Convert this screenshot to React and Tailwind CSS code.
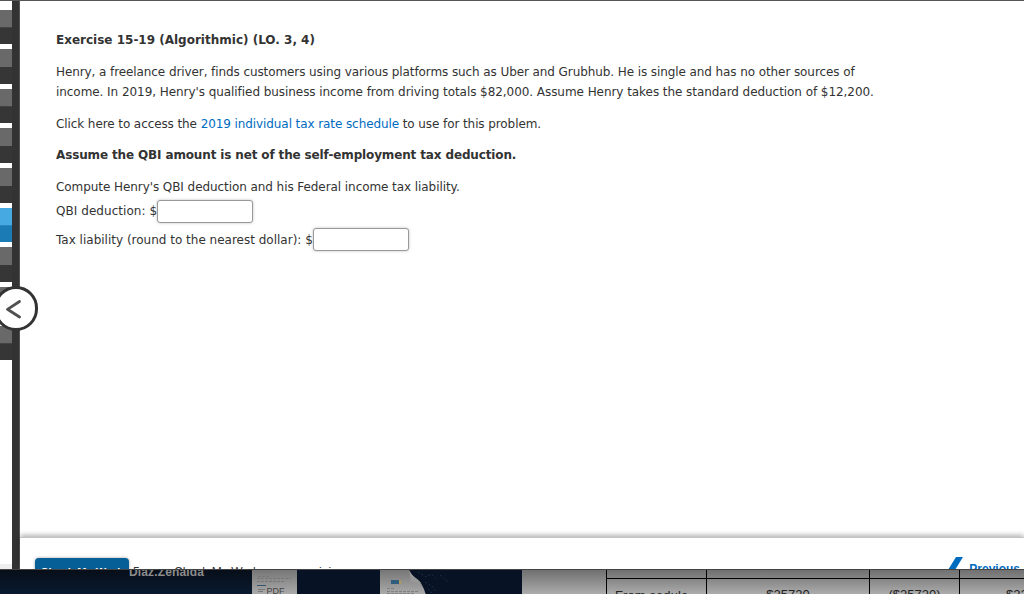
import clsx from 'clsx';

const TILES = [
  { id: 1, height: 'h-[34px]' },
  { id: 2, height: 'h-[35px]' },
  { id: 3, height: 'h-[34px]' },
  { id: 4, height: 'h-[35px]' },
  { id: 5, height: 'h-[35px]' },
  { id: 6, height: 'h-[34px]', active: true },
  { id: 7, height: 'h-[35px]' },
  { id: 8, height: 'h-[34px]' },
  { id: 9, height: 'h-[34px]' },
];

function QuestionRail() {
  return (
    <aside className="relative flex w-5 shrink-0">
      <div className="flex w-3 flex-col justify-between bg-white">
        <div className="flex flex-col gap-[5px] pt-[9px]">
          {TILES.map((tile) => (
            <div
              key={tile.id}
              className={clsx(
                'w-3',
                tile.height,
                tile.active
                  ? 'bg-linear-to-b from-[#47a9e1] from-50% to-[#1b7bb5] to-52%'
                  : 'bg-linear-to-b from-[#696969] from-50% to-[#363636] to-52%'
              )}
            />
          ))}
        </div>
        <div className="h-[5px] bg-[#eeeeee]" />
      </div>
      <div className="w-2 border-r border-[#555555] bg-[#333333]" />
      <button
        type="button"
        aria-label="Collapse"
        className="absolute top-[285px] -left-1.5 z-10 flex h-[45px] w-11 items-center rounded-full border-3 border-[#333333] bg-white pl-2"
      >
        <svg width="16" height="20" viewBox="0 0 16 20" fill="none" stroke="#505050" strokeWidth="2.8" strokeLinecap="round" strokeLinejoin="round">
          <path d="M14.5 2.5 2.5 10.3 14.5 18" />
        </svg>
      </button>
    </aside>
  );
}

function AnswerInput({ label }) {
  return (
    <input
      aria-label={label}
      className="h-[23px] w-24 rounded-[3px] border border-[#999999] bg-white shadow-[0_0_3px_rgba(0,0,0,0.25)] outline-none"
    />
  );
}

function Exercise() {
  return (
    <main className="h-[536px] overflow-hidden pt-[29px] pl-9 font-['DejaVu_Sans'] text-[12px] leading-[20.5px] whitespace-nowrap text-[#333333]">
      <h1 className="font-bold">Exercise 15-19 (Algorithmic) (LO. 3, 4)</h1>
      <div className="mt-[11px]">
        <p className="tracking-[-0.09px]">Henry, a freelance driver, finds customers using various platforms such as Uber and Grubhub. He is single and has no other sources of</p>
        <p className="tracking-[-0.058px]">income. In 2019, Henry's qualified business income from driving totals $82,000. Assume Henry takes the standard deduction of $12,200.</p>
      </div>
      <p className="mt-[11px] tracking-[-0.09px]">
        Click here to access the <a className="text-[#006cbf]">2019 individual tax rate schedule</a> to use for this problem.
      </p>
      <p className="mt-[11px] font-bold tracking-[-0.14px]">Assume the QBI amount is net of the self-employment tax deduction.</p>
      <p className="mt-[11px] tracking-[-0.07px]">Compute Henry's QBI deduction and his Federal income tax liability.</p>
      <div className="mt-[3px] flex h-[23px] items-center">
        <span className="tracking-[0.05px]">QBI deduction: $</span>
        <AnswerInput label="QBI deduction" />
      </div>
      <div className="mt-[5px] flex h-[23px] items-center">
        <span className="pt-px">Tax liability (round to the nearest dollar): $</span>
        <AnswerInput label="Tax liability" />
      </div>
    </main>
  );
}

function ActionBar() {
  return (
    <footer className="relative flex h-8 items-start border-t border-[#c4c4c4] bg-white pl-[15px] shadow-[0_-2px_5px_rgba(0,0,0,0.3)]">
      <button type="button" className="mt-5 flex h-7 w-[94px] items-start justify-center rounded-[4px] bg-[#075f98] pt-1.5 font-['Liberation_Sans'] text-[11px] leading-4 font-bold tracking-[0.1px] whitespace-nowrap text-white shadow-[0_0_3px_rgba(0,0,0,0.4)]">
        Check My Work
      </button>
      <p className="mt-[26px] ml-1 font-['Liberation_Sans'] text-[12px] leading-4 tracking-[0.05px] whitespace-nowrap text-[#333333]">
        5 more Check My Work uses remaining.
      </p>
      <div className="mt-[19px] mr-1 ml-auto flex items-start gap-[5px] text-[#006cbf]">
        <svg width="16" height="26" viewBox="0 0 16 26" fill="currentColor">
          <path d="M8 0h7L7 13l8 13H8L0 13z" />
        </svg>
        <span className="mt-1 font-['Liberation_Sans'] text-[12px] leading-4 font-bold">Previous</span>
      </div>
    </footer>
  );
}

function PdfThumb() {
  return (
    <svg className="shrink-0" width="45" height="25" viewBox="0 0 45 25">
      <defs>
        <linearGradient id="pdf" x1="0" y1="0" x2="0" y2="1">
          <stop offset="0" stopColor="#767676" />
          <stop offset="1" stopColor="#acacac" />
        </linearGradient>
      </defs>
      <rect width="45" height="25" fill="url(#pdf)" />
      <g stroke="#777777" strokeWidth="1">
        <path d="M6 2.5h4M15 2.5h5M6 6.5h12M5 8.5h34M5 11.5h28" strokeDasharray="3 1" />
        <path d="M6 19.5h7M6 21.5h5" />
      </g>
      <path d="M5 15.5h9" stroke="#34546f" />
      <text x="14.5" y="23.5" fill="#444444" fontSize="9" fontFamily="Liberation Sans">PDF</text>
    </svg>
  );
}

function PageThumb() {
  return (
    <svg className="shrink-0" width="142" height="25" viewBox="0 0 142 25">
      <defs>
        <linearGradient id="page" x1="0" y1="0" x2="0" y2="1">
          <stop offset="0" stopColor="#767676" />
          <stop offset="1" stopColor="#acacac" />
        </linearGradient>
      </defs>
      <rect width="142" height="25" fill="#071224" />
      <path d="M0 0h29q3 6 8 9t9 16H0z" fill="url(#page)" />
      <path d="M29 0q3 6 8 9l4 4-10-1z" fill="#989898" />
      <rect x="11" y="10" width="9" height="4" fill="#315d7d" />
      <rect x="19" y="10" width="2" height="4" fill="#ad995d" />
      <path d="M7 18.5h7M7 21.5h32M7 23.5h28" stroke="#808080" strokeDasharray="3 1" />
      <path d="M38 2l8 5 5-3 7 6M45 12l7 4 4 6M60 5l8 7M48 19l5 5" stroke="#1b3046" strokeWidth="1" fill="none" strokeDasharray="2 2" />
    </svg>
  );
}

function Desktop() {
  return (
    <section className="flex h-[25px] overflow-hidden border-t border-[#444444] bg-[#071224] whitespace-nowrap">
      <div className="w-[252px] shrink-0 bg-linear-to-b from-[#070e19] to-[#091a30] pl-[129px]">
        <span className="block -translate-y-[6px] font-['Liberation_Sans'] text-[12px] leading-4 font-bold tracking-[0.15px] text-[#8c8c8c]">Diaz.Zenaida</span>
      </div>
      <PdfThumb />
      <div className="w-[83px] shrink-0" />
      <PageThumb />
      <div className="flex flex-1 bg-linear-to-b from-[#707070] to-[#acacac] pl-[84px] font-['Liberation_Sans'] text-[13px] text-[#222222]">
        <div className="grid w-[418px] shrink-0 grid-cols-[100px_163px_90px_65px] grid-rows-[9px_24px] border-l border-black">
          <div className="border-r border-b border-black" />
          <div className="border-r border-b border-black" />
          <div className="border-r border-b border-black" />
          <div className="border-b border-black" />
          <div className="border-r border-black pt-[9px] pl-2 leading-4 tracking-[0.1px]">From sedule</div>
          <div className="border-r border-black pt-2 text-center leading-4">$25720</div>
          <div className="border-r border-black pt-2 text-center leading-4">($25720)</div>
          <div className="pt-2 pl-[46px] leading-4">$22</div>
        </div>
      </div>
    </section>
  );
}

export default function App() {
  return (
    <div className="h-[594px] w-[1024px] overflow-hidden bg-white">
      <div className="flex h-[569px] overflow-hidden border-t border-[#555555]">
        <QuestionRail />
        <div className="min-w-0 flex-1">
          <Exercise />
          <ActionBar />
        </div>
      </div>
      <Desktop />
    </div>
  );
}
